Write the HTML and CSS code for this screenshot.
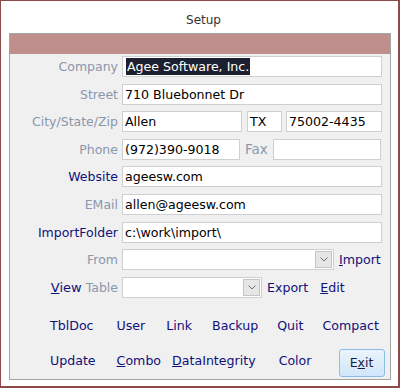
FILE: index.html
```html
<!DOCTYPE html>
<html lang="en">
<head>
    <meta charset="UTF-8">
    <title>Setup</title>
    <link rel="stylesheet" href="styles.css">
</head>
<body>
    <div class="window">
        <div class="title">Setup</div>
        <div class="panel">
            <div class="panel-header"></div>
            <div class="panel-body">
                <div class="form">
                    <div class="row">
                        <span class="label">Company</span>
                        <div class="field grow"><span class="selected">Agee Software, Inc.</span></div>
                    </div>
                    <div class="row">
                        <span class="label">Street</span>
                        <div class="field grow">710 Bluebonnet Dr</div>
                    </div>
                    <div class="row">
                        <span class="label">City/State/Zip</span>
                        <div class="field city">Allen</div>
                        <div class="field state">TX</div>
                        <div class="field zip">75002-4435</div>
                    </div>
                    <div class="row">
                        <span class="label">Phone</span>
                        <div class="field phone">(972)390-9018</div>
                        <span class="label fax">Fax</span>
                        <div class="field faxfield"></div>
                    </div>
                    <div class="row">
                        <span class="label link">Website</span>
                        <div class="field grow">ageesw.com</div>
                    </div>
                    <div class="row">
                        <span class="label">EMail</span>
                        <div class="field grow">allen@ageesw.com</div>
                    </div>
                    <div class="row">
                        <span class="label link">ImportFolder</span>
                        <div class="field grow">c:\work\import\</div>
                    </div>
                    <div class="row">
                        <span class="label">From</span>
                        <div class="field combo from">
                            <span class="drop"><svg width="8" height="5" viewBox="0 0 8 5"><path d="M0.5 0.5 L4 4 L7.5 0.5" fill="none" stroke="#6d6d6d" stroke-width="1"/></svg></span>
                        </div>
                        <a class="cmd import"><u>I</u>mport</a>
                    </div>
                    <div class="row">
                        <span class="label view"><a class="cmd"><u>V</u>iew</a> <span class="gray">Table</span></span>
                        <div class="field combo table">
                            <span class="drop"><svg width="8" height="5" viewBox="0 0 8 5"><path d="M0.5 0.5 L4 4 L7.5 0.5" fill="none" stroke="#6d6d6d" stroke-width="1"/></svg></span>
                        </div>
                        <a class="cmd export">Export</a>
                        <a class="cmd edit"><u>E</u>dit</a>
                    </div>
                </div>

                <div class="buttons one">
                    <a class="cmd b-tbldoc">TblDoc</a>
                    <a class="cmd b-user">User</a>
                    <a class="cmd b-link">Link</a>
                    <a class="cmd b-backup">Backup</a>
                    <a class="cmd b-quit">Quit</a>
                    <a class="cmd b-compact">Compact</a>
                </div>
                <div class="buttons two">
                    <a class="cmd b-update">Update</a>
                    <a class="cmd b-combo"><u>C</u>ombo</a>
                    <a class="cmd b-data"><u>D</u>ataIntegrity</a>
                    <a class="cmd b-color">Color</a>
                    <button class="exit">E<u>x</u>it</button>
                </div>
            </div>
        </div>
    </div>
</body>
</html>
```
FILE: styles.css
```css
body {
    margin: 0;
    font-family: "DejaVu Sans", sans-serif;
    font-size: 12px;
    background: #fff;
}
.window {
    width: 397px;
    height: 385px;
    border: 1px solid #8c4a4a;
    border-width: 1px 2px 2px 1px;
    background: #fff;
}
.title {
    text-align: center;
    height: 32px;
    line-height: 38px;
    color: #333;
    font-size: 12px;
    padding-left: 8px;
}
.panel {
    margin-left: 8px;
    width: 380px;
    border: 1px solid #a4a4a4;
    background: #f0f0f0;
}
.panel-header {
    height: 20px;
    background: #bf8f8e;
}
.panel-body {
    height: 325px;
    padding-top: 2px;
    box-sizing: border-box;
}
.form {
    display: flex;
    flex-direction: column;
    gap: 6.6px;
}
.row {
    display: flex;
    align-items: center;
    height: 21px;
}
.label {
    width: 108px;
    text-align: right;
    color: #8a97ad;
    font-size: 12.5px;
    padding-right: 4px;
    flex-shrink: 0;
    white-space: nowrap;
}
.label.link {
    color: #10107a;
}
.gray {
    color: #8a97ad;
}
.field {
    height: 19px;
    line-height: 19px;
    background: #fff;
    border: 1px solid #cfcfcf;
    padding-left: 2px;
    box-sizing: content-box;
    font-size: 12.6px;
    color: #000;
    white-space: nowrap;
    overflow: hidden;
}
.grow {
    width: 256px;
}
.row .label.fax {
    width: auto;
    text-align: left;
    font-size: 13.5px;
    padding: 0 5px 0 5px;
}
.faxfield {
    width: 104px;
}
.selected {
    background: #1c2030;
    color: #fff;
    padding: 1px 1px;
    margin-left: 1px;
}
.city {
    width: 116px;
}
.state {
    width: 31px;
    margin-left: 5px;
}
.zip {
    width: 92px;
    margin-left: 4px;
}
.phone {
    width: 114px;
}
.combo {
    position: relative;
    padding-left: 0;
}
.from {
    width: 210px;
}
.table {
    width: 138px;
}
.drop {
    position: absolute;
    right: 1px;
    top: 1px;
    width: 17px;
    height: 17px;
    background: #e6e6e6;
    border: 1px solid #c4c4c4;
    box-sizing: border-box;
    display: flex;
    align-items: center;
    justify-content: center;
}
.cmd {
    color: #10107a;
    font-size: 12.6px;
    white-space: nowrap;
}
.import {
    margin-left: 5px;
}
.export {
    margin-left: 5px;
}
.edit {
    margin-left: 12px;
}
.view .cmd {
    font-size: 13px;
}
.buttons {
    display: flex;
    align-items: center;
    padding-left: 40px;
}
.buttons.one {
    margin-top: 15px;
    height: 26px;
}
.buttons.two {
    margin-top: 7px;
    height: 30px;
}
.b-user { margin-left: 23px; }
.b-link { margin-left: 21px; }
.b-backup { margin-left: 20px; }
.b-quit { margin-left: 19px; }
.b-compact { margin-left: 19px; }
.b-combo { margin-left: 21px; }
.b-data { margin-left: 11px; }
.b-color { margin-left: 23px; }
.exit {
    margin-left: 27px;
    width: 46px;
    height: 28px;
    margin-top: 4px;
    border: 1px solid #8cbce8;
    border-radius: 3px;
    background: linear-gradient(#eaf4fd, #d0e6fa);
    color: #1a1a4a;
    font-family: "DejaVu Sans", sans-serif;
    font-size: 12.5px;
}
```
